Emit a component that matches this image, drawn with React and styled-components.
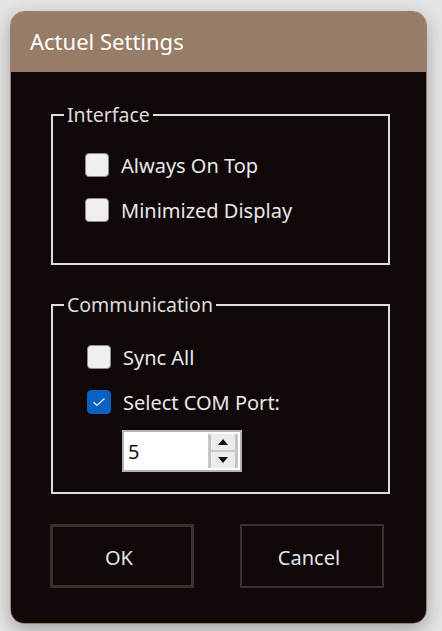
import React, { useState } from 'react'
import styled, { createGlobalStyle } from 'styled-components'

const GlobalStyle = createGlobalStyle`
    html, body {
        margin: 0;
        background: #e4e4e4;
    }
    body {
        font-family: "Noto Sans", "Open Sans", sans-serif;
    }
`

const Page = styled.div`
    padding: 11px 0 0 10px;
    height: 631px;
    box-sizing: border-box;
`

const Window = styled.div`
    width: 417px;
    height: 613px;
    box-sizing: border-box;
    border: 1px solid #9a7f6b;
    border-radius: 14px;
    overflow: hidden;
    display: flex;
    flex-direction: column;
    box-shadow: 0 6px 18px rgba(0, 0, 0, 0.28);
`

const TitleBar = styled.div`
    height: 60px;
    flex-shrink: 0;
    background: #977c67;
    color: #ffffff;
    font-size: 22px;
    display: flex;
    align-items: center;
    padding-left: 19px;
    padding-bottom: 3px;
    box-sizing: border-box;
`

const Body = styled.div`
    flex: 1;
    background: #0f0708;
    padding: 33px 36px 0 40px;
    display: flex;
    flex-direction: column;
`

const Group = styled.fieldset`
    margin: 0 0 ${p => p.$gap || 0}px;
    padding: 0;
    border: 2px solid #dddddd;
    min-inline-size: 0;
`

const Legend = styled.legend`
    margin-left: 11px;
    padding: 0 3px;
    font-size: 19.5px;
    line-height: 20px;
    color: #dcdcdc;
`

const GroupBody = styled.div`
    padding: ${p => p.$pad};
    display: flex;
    flex-direction: column;
    gap: 21px;
`

const Row = styled.label`
    display: flex;
    align-items: center;
    gap: 12px;
    height: 24px;
    color: #e8e8e8;
    font-size: 20px;
    cursor: default;
`

const Box = styled.span`
    width: 24px;
    height: 24px;
    box-sizing: border-box;
    border-radius: 4px;
    flex-shrink: 0;
    display: flex;
    align-items: center;
    justify-content: center;
    background: ${p => (p.$checked ? '#0b61c0' : '#efefef')};
    border: 1px solid ${p => (p.$checked ? '#0b61c0' : '#8a8a8a')};
`

const Spin = styled.div`
    margin: -5px 0 0 35px;
    width: 120px;
    height: 42px;
    box-sizing: border-box;
    border: 2px solid #b3b3b3;
    background: #ffffff;
    display: flex;
    align-items: center;
    padding: 1px 2px 1px 3px;
`

const SpinInput = styled.input`
    flex: 1;
    min-width: 0;
    border: none;
    outline: none;
    background: transparent;
    font-family: "Noto Sans", sans-serif;
    font-size: 20px;
    color: #111111;
    padding: 0 0 0 1px;
`

const SpinButtons = styled.div`
    width: 30px;
    height: 34px;
    display: flex;
    flex-direction: column;
    gap: 2px;
    background: #c9c9c9;
`

const SpinButton = styled.button`
    flex: 1;
    margin: 0 1px;
    border: none;
    background: #ececec;
    border-left: 2px solid #c2c2c2;
    border-right: 2px solid #c2c2c2;
    padding: 0;
    display: flex;
    align-items: center;
    justify-content: center;
`

const Buttons = styled.div`
    display: flex;
    gap: 46px;
    margin: 30px 0 0 -1px;
`

const DialogButton = styled.button`
    width: 144px;
    height: 64px;
    box-sizing: border-box;
    background: #0f0708;
    border: ${p => (p.$primary ? '3px' : '2px')} solid #3d2e2c;
    color: #e4e4e4;
    font-family: "Noto Sans", sans-serif;
    font-size: 20px;
    padding: 3px 6px 0 0;
`

const Check = ({ checked, label, onToggle }) => (
    <Row onClick={onToggle}>
        <Box $checked={checked}>
            {checked && (
                <svg width="14" height="10" viewBox="0 0 14 10">
                    <path d="M1.5 5.2 L5 8.4 L12.5 1.5" fill="none" stroke="#dbe8f8" strokeWidth="1.4" />
                </svg>
            )}
        </Box>
        {label}
    </Row>
)

const Arrow = ({ up }) => (
    <svg width="10" height="6" viewBox="0 0 10 6">
        <path d={up ? 'M0 6 L5 0 L10 6 Z' : 'M0 0 L10 0 L5 6 Z'} fill="#111" />
    </svg>
)

const App = () => {
    const [opts, setOpts] = useState({ top: false, min: false, sync: false, com: true })
    const [port, setPort] = useState(5)
    const toggle = k => setOpts(o => ({ ...o, [k]: !o[k] }))

    return (
        <Page>
            <GlobalStyle />
            <Window>
                <TitleBar>Actuel Settings</TitleBar>
                <Body>
                    <Group $gap={30}>
                        <Legend>Interface</Legend>
                        <GroupBody $pad="28px 0 41px 32px">
                            <Check checked={opts.top} label="Always On Top" onToggle={() => toggle('top')} />
                            <Check checked={opts.min} label="Minimized Display" onToggle={() => toggle('min')} />
                        </GroupBody>
                    </Group>
                    <Group>
                        <Legend>Communication</Legend>
                        <GroupBody $pad="30px 0 20px 34px">
                            <Check checked={opts.sync} label="Sync All" onToggle={() => toggle('sync')} />
                            <Check checked={opts.com} label="Select COM Port:" onToggle={() => toggle('com')} />
                            <Spin>
                                <SpinInput value={port} onChange={e => setPort(e.target.value)} />
                                <SpinButtons>
                                    <SpinButton onClick={() => setPort(p => Number(p) + 1)}><Arrow up /></SpinButton>
                                    <SpinButton onClick={() => setPort(p => Math.max(1, Number(p) - 1))}><Arrow /></SpinButton>
                                </SpinButtons>
                            </Spin>
                        </GroupBody>
                    </Group>
                    <Buttons>
                        <DialogButton $primary>OK</DialogButton>
                        <DialogButton>Cancel</DialogButton>
                    </Buttons>
                </Body>
            </Window>
        </Page>
    )
}

export default App
